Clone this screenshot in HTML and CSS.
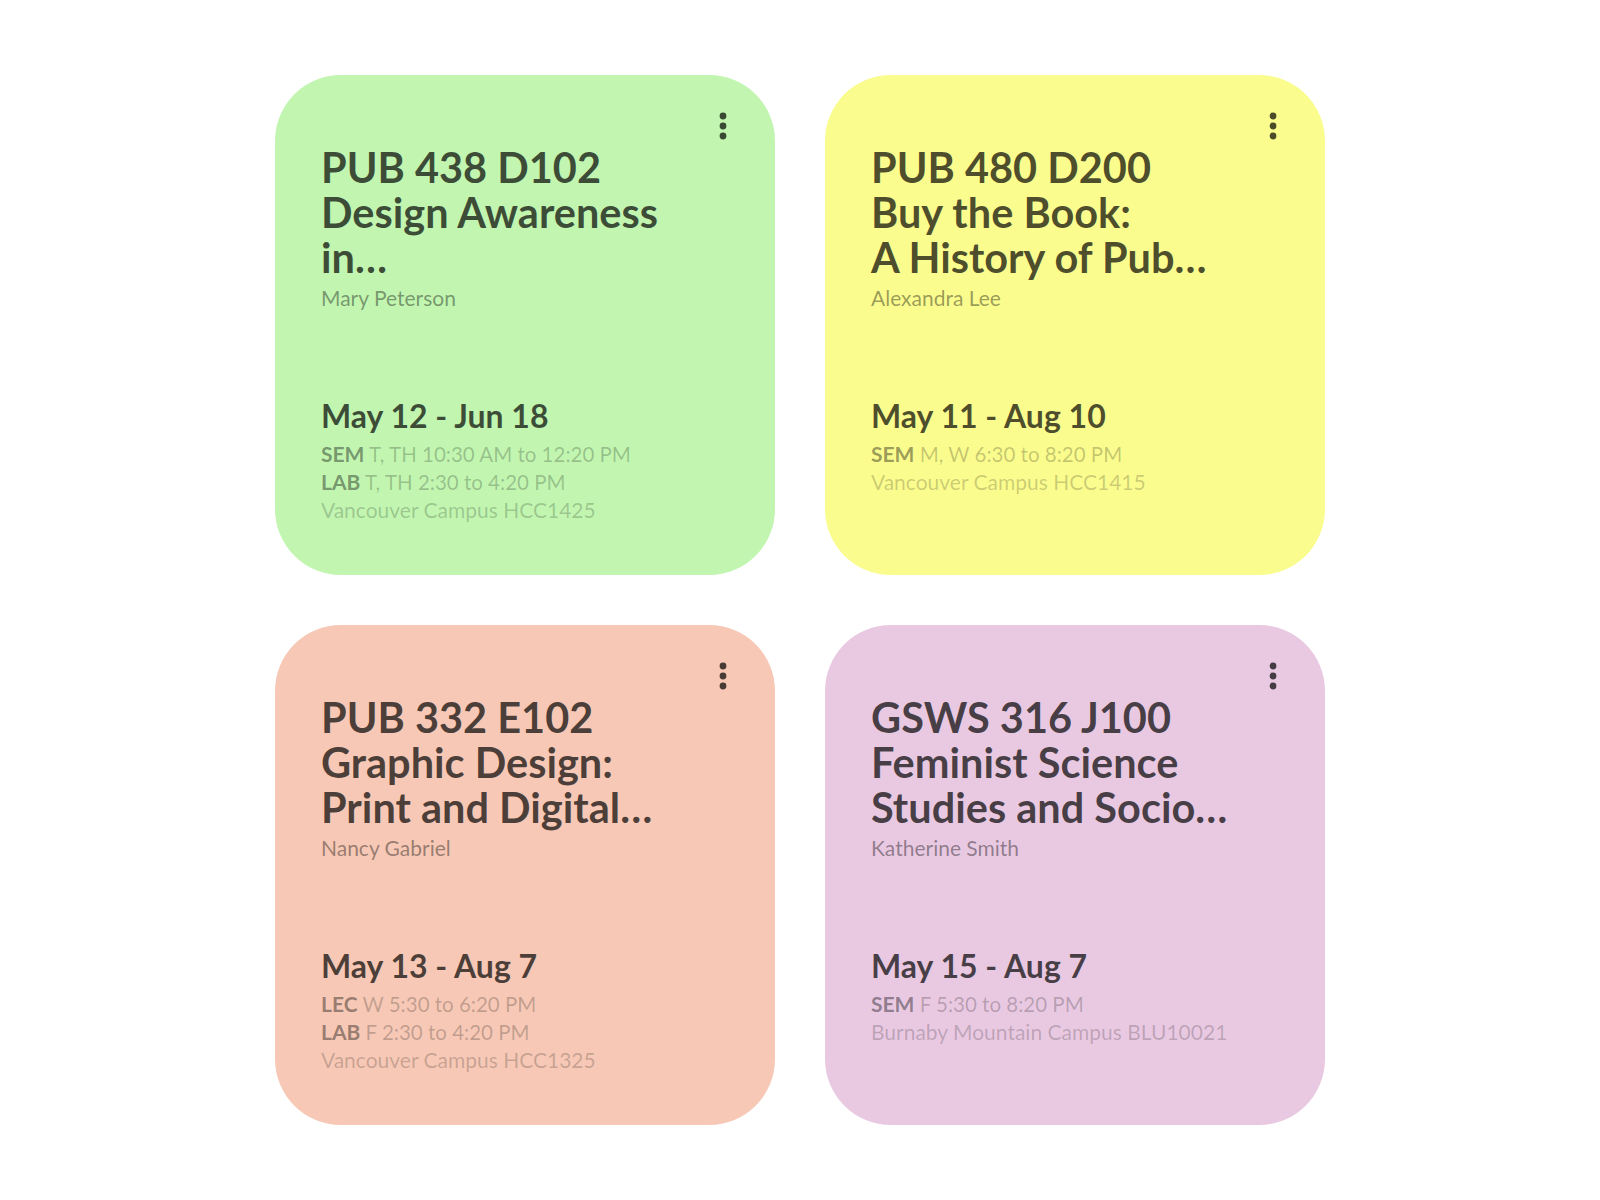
FILE: index.html
```html
<!DOCTYPE html>
<html lang="en">
<head>
<meta charset="utf-8">
<title>Courses</title>
<link rel="stylesheet" href="styles.css">
</head>
<body>
<main class="grid">
  <article class="card card-green">
    <svg class="kebab" width="8" height="28" viewBox="0 0 8 28"><circle cx="4" cy="4" r="3.4"/><circle cx="4" cy="14" r="3.4"/><circle cx="4" cy="24" r="3.4"/></svg>
    <h2 class="title">PUB 438 D102<br>Design Awareness<br>in…</h2>
    <p class="teacher">Mary Peterson</p>
    <p class="dates">May 12 - Jun 18</p>
    <div class="details">
      <p class="row"><b class="kind">SEM</b> T, TH 10:30 AM to 12:20 PM</p>
      <p class="row"><b class="kind">LAB</b> T, TH 2:30 to 4:20 PM</p>
      <p class="row place">Vancouver Campus HCC1425</p>
    </div>
  </article>
  <article class="card card-yellow">
    <svg class="kebab" width="8" height="28" viewBox="0 0 8 28"><circle cx="4" cy="4" r="3.4"/><circle cx="4" cy="14" r="3.4"/><circle cx="4" cy="24" r="3.4"/></svg>
    <h2 class="title">PUB 480 D200<br>Buy the Book:<br>A History of Pub…</h2>
    <p class="teacher">Alexandra Lee</p>
    <p class="dates">May 11 - Aug 10</p>
    <div class="details">
      <p class="row"><b class="kind">SEM</b> M, W 6:30 to 8:20 PM</p>
      <p class="row place">Vancouver Campus HCC1415</p>
    </div>
  </article>
  <article class="card card-salmon">
    <svg class="kebab" width="8" height="28" viewBox="0 0 8 28"><circle cx="4" cy="4" r="3.4"/><circle cx="4" cy="14" r="3.4"/><circle cx="4" cy="24" r="3.4"/></svg>
    <h2 class="title">PUB 332 E102<br>Graphic Design:<br>Print and Digital…</h2>
    <p class="teacher">Nancy Gabriel</p>
    <p class="dates">May 13 - Aug 7</p>
    <div class="details">
      <p class="row"><b class="kind">LEC</b> W 5:30 to 6:20 PM</p>
      <p class="row"><b class="kind">LAB</b> F 2:30 to 4:20 PM</p>
      <p class="row place">Vancouver Campus HCC1325</p>
    </div>
  </article>
  <article class="card card-lilac">
    <svg class="kebab" width="8" height="28" viewBox="0 0 8 28"><circle cx="4" cy="4" r="3.4"/><circle cx="4" cy="14" r="3.4"/><circle cx="4" cy="24" r="3.4"/></svg>
    <h2 class="title">GSWS 316 J100<br>Feminist Science<br>Studies and Socio…</h2>
    <p class="teacher">Katherine Smith</p>
    <p class="dates">May 15 - Aug 7</p>
    <div class="details">
      <p class="row"><b class="kind">SEM</b> F 5:30 to 8:20 PM</p>
      <p class="row place">Burnaby Mountain Campus BLU10021</p>
    </div>
  </article>
</main>
</body>
</html>
```

FILE: styles.css
```css
* { box-sizing: border-box; }

html, body {
  margin: 0;
  padding: 0;
  background: #ffffff;
}

body {
  font-family: Lato, "Open Sans", "Liberation Sans", sans-serif;
}

.grid {
  display: grid;
  grid-template-columns: 500px 500px;
  grid-auto-rows: 500px;
  gap: 50px;
  justify-content: center;
  padding-top: 75px;
}

.card {
  position: relative;
  border-radius: 66px;
  padding: 70px 40px 0 46px;
  color: rgba(0, 0, 0, 0.7);
}

.card-green  { background: #c1f5b0; }
.card-yellow { background: #fafc8e; }
.card-salmon { background: #f6c8b5; }
.card-lilac  { background: #e9c9e2; }

.kebab {
  position: absolute;
  top: 37px;
  right: 48px;
  fill: rgba(0, 0, 0, 0.7);
}

.title {
  margin: 0;
  font-size: 41.5px;
  line-height: 45px;
  font-weight: 700;
  white-space: nowrap;
}

.teacher {
  margin: 4px 0 0 0;
  font-size: 21px;
  line-height: 28px;
  color: rgba(0, 0, 0, 0.4);
}

.dates {
  margin: 86px 0 0 0;
  font-size: 32px;
  line-height: 36px;
  font-weight: 700;
}

.details {
  margin-top: 6px;
}

.row {
  margin: 0;
  font-size: 20.5px;
  line-height: 28px;
  color: rgba(0, 0, 0, 0.22);
}

.kind {
  font-size: 21px;
  font-weight: 700;
  color: rgba(0, 0, 0, 0.4);
}

.place {
  font-size: 21px;
  color: rgba(0, 0, 0, 0.2);
}
```
